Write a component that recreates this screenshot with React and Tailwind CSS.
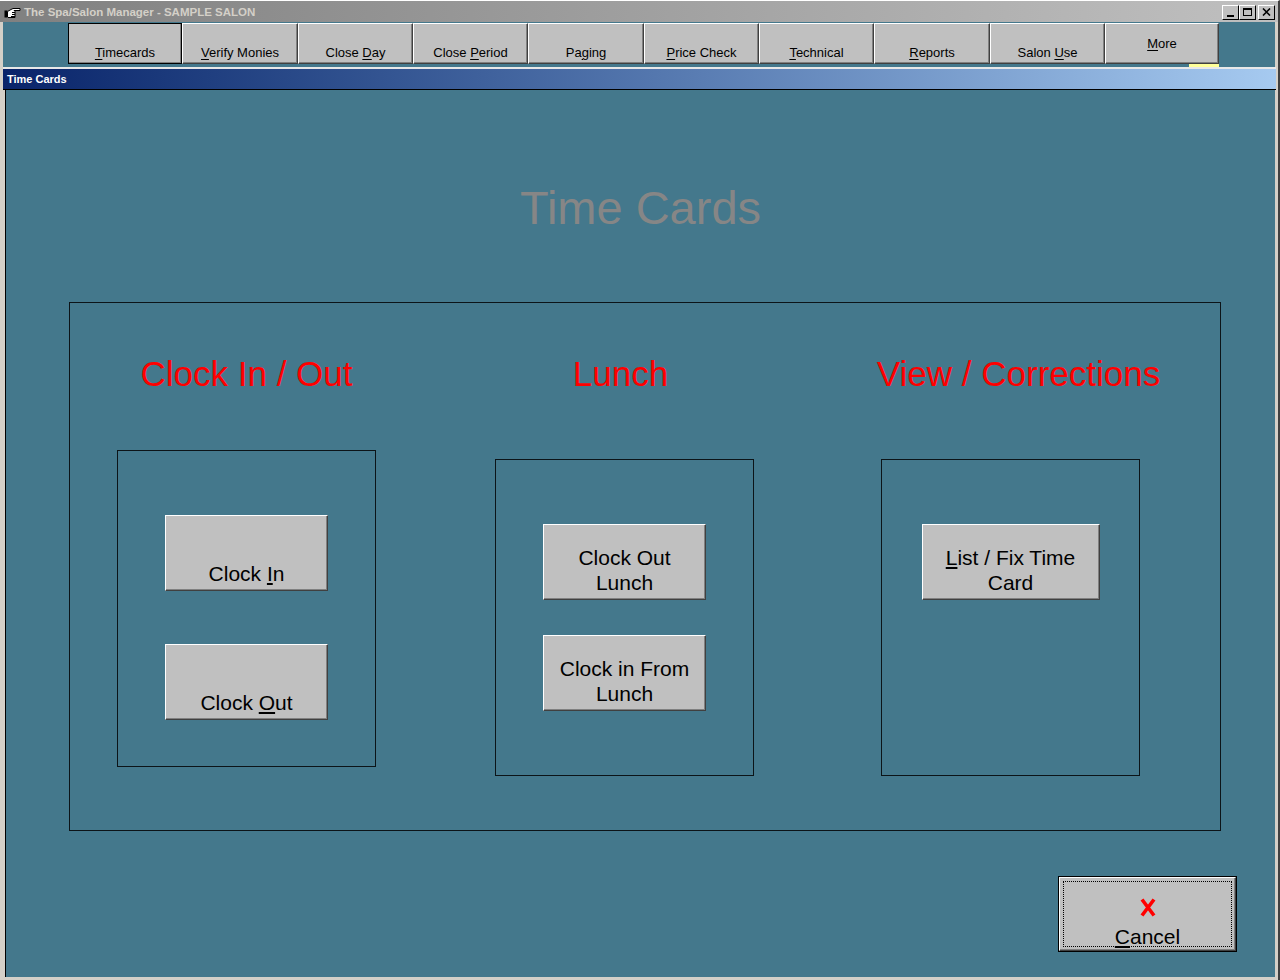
import React from "react";

// Time Cards screen of the salon manager app (classic Win32 look)

const MENU = [
  { w: "w-[114px]", pre: "", u: "T", post: "imecards", isDefault: true },
  { w: "w-[116px]", pre: "", u: "V", post: "erify Monies" },
  { w: "w-[115px]", pre: "Close ", u: "D", post: "ay" },
  { w: "w-[115px]", pre: "Close ", u: "P", post: "eriod" },
  { w: "w-[116px]", pre: "Pa", u: "g", post: "ing" },
  { w: "w-[115px]", pre: "", u: "P", post: "rice Check" },
  { w: "w-[115px]", pre: "", u: "T", post: "echnical" },
  { w: "w-[116px]", pre: "", u: "R", post: "eports" },
  { w: "w-[115px]", pre: "Salon ", u: "U", post: "se" },
];

const bevel =
  "bg-[#c0c0c0] border-t border-l border-r border-b border-t-white border-l-white border-r-[#404040] border-b-[#404040] shadow-[inset_-1px_-1px_0_#808080]";

function Label({ pre, u, post }) {
  return (
    <span>
      {pre}
      <span className="underline underline-offset-2">{u}</span>
      {post}
    </span>
  );
}

function MenuButton({ item }) {
  return (
    <div
      className={`${item.w} h-[41px] shrink-0 ${
        item.isDefault ? "outline outline-1 outline-black -outline-offset-1" : ""
      } ${bevel} flex items-end justify-center pb-[3px] text-[13px] leading-[15px] text-black`}
    >
      <Label {...item} />
    </div>
  );
}

function ActionButton({ w = "w-[163px]", children, className = "" }) {
  return (
    <div
      className={`${w} h-[76px] ${bevel} flex flex-col items-center justify-end pb-[4px] text-[21px] leading-[25px] text-black text-center ${className}`}
    >
      {children}
    </div>
  );
}

function Section({ title, headingShift, boxTop, colGap, children }) {
  return (
    <div className={`w-[259px] shrink-0 flex flex-col ${colGap}`}>
      <div
        className={`h-[35px] flex justify-center whitespace-nowrap text-[35px] leading-[35px] text-[#ff0000] ${headingShift}`}
      >
        {title}
      </div>
      <div
        className={`${boxTop} w-[259px] h-[317px] border border-[#0c1418] flex flex-col items-center pt-[64px]`}
      >
        {children}
      </div>
    </div>
  );
}

// pointing-hand app icon in the title bar
function HandIcon() {
  return (
    <svg width="17" height="12" viewBox="0 0 17 12" className="mt-[2px] mr-[3px]">
      <rect x="0.5" y="3.5" width="3" height="7" fill="black" />
      <path
        d="M3.5 4.5 L7 2.5 L9 1.5 L16 1.5 L16 3.5 L10 3.5 L11 4.5 L11 10.5 L4 10.5 L3.5 10 Z"
        fill="white"
        stroke="black"
        strokeWidth="1"
      />
      <path d="M8 5.5 L11 5.5 M8 7.5 L11 7.5 M7 9.5 L11 9.5" stroke="black" strokeWidth="1" />
    </svg>
  );
}

function WindowButtons() {
  return (
    <div className="flex items-center mr-[3px] mt-[1px]">
      <div className="w-[17px] h-[15px] bg-[#c0c0c0] border border-t-white border-l-white border-r-black border-b-black flex items-end justify-center pb-[2px]">
        <div className="w-[7px] h-[2px] bg-black" />
      </div>
      <div className="w-[17px] h-[15px] bg-[#c0c0c0] border border-t-white border-l-white border-r-black border-b-black flex items-center justify-center">
        <div className="w-[9px] h-[8px] border border-black border-t-2" />
      </div>
      <div className="ml-[2px] w-[17px] h-[15px] bg-[#c0c0c0] border border-t-white border-l-white border-r-black border-b-black flex items-center justify-center">
        <svg width="9" height="8" viewBox="0 0 9 8">
          <path d="M1 0.5 L8 7.5 M8 0.5 L1 7.5" stroke="black" strokeWidth="1.6" />
        </svg>
      </div>
    </div>
  );
}

export default function App() {
  return (
    <div
      className="w-[1280px] h-[980px] bg-[#d4d0c8] border-t border-t-white border-r-2 border-r-[#404040] flex flex-col overflow-hidden"
      style={{ fontFamily: '"Liberation Sans", Arial, sans-serif' }}
    >
      {/* title bar */}
      <div className="h-[21px] shrink-0 flex items-center bg-gradient-to-r from-[#808080] to-[#c0c0c0] pl-[4px]">
        <HandIcon />
        <span className="mt-[3px] text-[11.5px] font-bold text-[#d4d0c8]">The Spa/Salon Manager - SAMPLE SALON</span>
        <div className="flex-1" />
        <WindowButtons />
      </div>

      {/* module menu */}
      <div className="h-[45px] shrink-0 ml-[3px] mr-[3px] bg-[#44788c] flex pl-[65px] pt-[1px]">
        {MENU.map((m, i) => (
          <MenuButton key={i} item={m} />
        ))}
        <div className="w-[114px] shrink-0 flex flex-col items-end">
          <div className={`w-[114px] h-[41px] ${bevel} flex items-end justify-center pb-[12px] text-[13px] leading-[15px] text-black`}>
            <Label pre="" u="M" post="ore" />
          </div>
          <div className="w-[30px] h-[3px] bg-[#ffff99]" />
        </div>
      </div>

      {/* child window caption */}
      <div className="shrink-0 ml-[3px] mr-[2px] border-t-2 border-t-[#e8e8e8] border-b border-b-black">
        <div className="h-[20px] bg-gradient-to-r from-[#0a246a] to-[#a6caf0] flex items-center pl-[4px]">
          <span className="text-[11px] font-bold text-white">Time Cards</span>
        </div>
      </div>

      {/* content */}
      <div className="flex-1 ml-[5px] mr-[2px] mb-[3px] bg-[#44788c] border-l border-l-black border-r border-r-[#d4d0c8] flex flex-col">
        <div className="mt-[94px] h-[47px] text-center text-[47px] leading-[47px] text-[#868686]">Time Cards</div>

        <div className="mt-[71px] ml-[63px] w-[1152px] h-[529px] shrink-0 border border-[#0c1418] flex pl-[47px] pt-[53px]">
          <Section title="Clock In / Out" headingShift="" boxTop="mt-[59px]" colGap="">
            <ActionButton>
              <span>
                Clock <span className="underline underline-offset-2">I</span>n
              </span>
            </ActionButton>
            <ActionButton className="mt-[53px]">
              <span>
                Clock <span className="underline underline-offset-2">O</span>ut
              </span>
            </ActionButton>
          </Section>

          <Section title="Lunch" headingShift="pr-[8px]" boxTop="mt-[68px]" colGap="ml-[119px]">
            <ActionButton>
              <span>Clock Out</span>
              <span>Lunch</span>
            </ActionButton>
            <ActionButton className="mt-[35px]">
              <span>Clock in From</span>
              <span>Lunch</span>
            </ActionButton>
          </Section>

          <Section title="View / Corrections" headingShift="pl-[16px]" boxTop="mt-[68px]" colGap="ml-[127px]">
            <ActionButton w="w-[178px]">
              <span>
                <span className="underline underline-offset-2">L</span>ist / Fix Time
              </span>
              <span>Card</span>
            </ActionButton>
          </Section>
        </div>

        <div className="self-end mt-[45px] mr-[38px] w-[179px] h-[76px] border border-black">
          <div className={`w-full h-full ${bevel} p-[3px]`}>
            <div className="w-full h-full border border-dotted border-black flex flex-col items-center justify-end text-[21px] leading-[19px] text-black">
              <svg width="16" height="19" viewBox="0 0 16 19" className="mb-[10px]">
                <path d="M2 1.5 L14 17.5 M14 1.5 L2 17.5" stroke="#ff0000" strokeWidth="3.6" />
              </svg>
              <span>
                <span className="underline underline-offset-2">C</span>ancel
              </span>
            </div>
          </div>
        </div>
      </div>
    </div>
  );
}
